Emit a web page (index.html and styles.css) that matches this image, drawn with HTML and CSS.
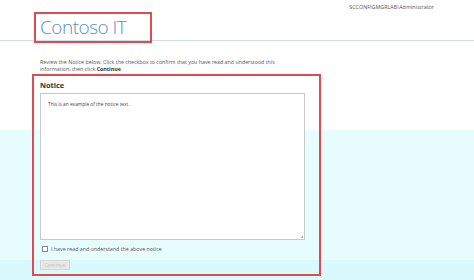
FILE: index.html
```html
<!DOCTYPE html>
<html lang="en">
<head>
<meta charset="utf-8">
<title>Contoso IT</title>
<link rel="stylesheet" href="styles.css">
</head>
<body>
<header class="topbar">
  <div class="brand"><span class="brand-text">Contoso IT</span></div>
  <span class="user">SCCONFIGMGRLAB\Administrator</span>
</header>
<main class="content">
  <p class="intro"><span class="line">Review the Notice below. Click the checkbox to confirm that you have read and understood this</span><span class="line">information, then click <b>Continue</b>.</span></p>
  <section class="notice">
    <h2 class="notice-title">Notice</h2>
    <div class="notice-text"><span>This is an example of the notice text.</span><span class="grip"></span></div>
    <label class="agree"><span class="box"></span>I have read and understand the above notice</label>
    <button class="continue" disabled>Continue</button>
  </section>
</main>
</body>
</html>
```
FILE: styles.css
```css
html, body {
  margin: 0;
  height: 100%;
}
body {
  font-family: "Open Sans", "Noto Sans", sans-serif;
  color: #333;
  background: linear-gradient(to bottom, #ffffff 0, #ffffff 130px, #e7fcfd 130px, #e7fcfd 260px, #d9fafc 260px, #d9fafc 100%);
  overflow: hidden;
}
.topbar {
  height: 40px;
  border-bottom: 1px solid #cddfea;
  display: flex;
  justify-content: space-between;
  align-items: flex-start;
}
.brand {
  margin: 12px 0 0 34px;
  width: 110px;
  height: 27px;
  border: 2px solid #dc4c52;
  padding-left: 4px;
  position: relative;
  z-index: 1;
}
.brand-text {
  font-size: 19px;
  font-weight: 300;
  letter-spacing: -0.5px;
  line-height: 27px;
  color: #5a8ec6;
  display: block;
}
.user {
  font-size: 5.4px;
  color: #555;
  margin: 3px 40px 0 0;
}
.content {
  padding: 0 0 0 32px;
}
.intro {
  margin: 18px 0 2px 8px;
  font-size: 5.3px;
  line-height: 6.6px;
  color: #555;
}
.intro .line {
  display: block;
  white-space: nowrap;
}
.intro b {
  color: #333;
}
.notice {
  width: 279px;
  height: 198px;
  border: 2px solid #dc4c52;
  padding: 0 0 0 6px;
  display: flex;
  flex-direction: column;
  align-items: flex-start;
}
.notice-title {
  margin: 3px 0 0 0;
  font-size: 7.4px;
  line-height: 12px;
  font-weight: 700;
  color: #333;
}
.notice-text {
  margin-top: 2px;
  width: 265px;
  height: 147px;
  box-sizing: border-box;
  border: 1px solid #c8c8c8;
  background: #fff;
  padding: 7px 0 0 7px;
  font-size: 4.8px;
  color: #444;
  position: relative;
}
.grip {
  position: absolute;
  right: 1px;
  bottom: 1px;
  width: 3px;
  height: 3px;
  background: linear-gradient(135deg, transparent 50%, #aaa 50%);
}
.agree {
  margin-top: 5px;
  margin-left: 2px;
  display: flex;
  align-items: center;
  font-size: 5.3px;
  line-height: 8px;
  color: #555;
}
.box {
  width: 4px;
  height: 4px;
  border: 1px solid #888;
  background: #fff;
  margin-right: 3px;
}
.continue {
  margin-top: 7px;
  width: 30px;
  height: 10px;
  padding: 0;
  border: 1px solid #d6d6d6;
  background: #e8e8e8;
  color: #c0c0c0;
  font-family: "Open Sans", sans-serif;
  font-size: 5px;
  line-height: 8px;
}
```
